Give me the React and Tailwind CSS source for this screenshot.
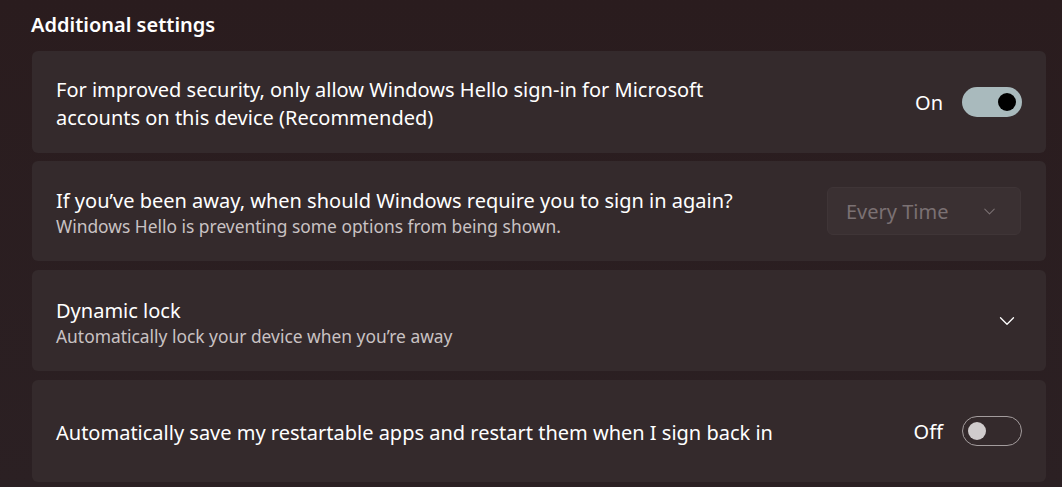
import { ChevronDown } from 'lucide-react';

const font = { fontFamily: '"Noto Sans", "Open Sans", sans-serif' };

const Toggle = ({ on }) =>
  on ? (
    <div className="flex h-[30px] w-[60px] items-center justify-end rounded-full bg-[#a9babd] pr-[6px]">
      <div className="h-[18px] w-[18px] rounded-full bg-black" />
    </div>
  ) : (
    <div className="flex h-[30px] w-[60px] items-center rounded-full border border-[#a39c9d] pl-[5px]">
      <div className="h-[18px] w-[18px] rounded-full bg-[#d0cccd]" />
    </div>
  );

const Card = ({ children, className = '' }) => (
  <div className={`flex items-center justify-between rounded-md bg-[#342a2c] pl-6 pr-6 ${className}`}>
    {children}
  </div>
);

export default function App() {
  return (
    <div
      className="h-[487px] w-[1062px] overflow-hidden bg-gradient-to-b from-[#2a1c1e] to-[#2b2023] pl-8 pr-4 pt-[11px] text-white"
      style={font}
    >
      <h2 className="-ml-px mb-[12px] text-[20px] font-semibold leading-7">Additional settings</h2>
      <div className="flex flex-col">
        <Card className="h-[102px]">
          <p className="pt-[3px] text-[20px] leading-7">
            For improved security, only allow Windows Hello sign-in for Microsoft
            <br />
            accounts on this device (Recommended)
          </p>
          <div className="flex items-center gap-[19px]">
            <span className="pt-[2px] text-[20px]">On</span>
            <Toggle on />
          </div>
        </Card>

        <Card className="mt-2 h-[100px] pr-[25px]">
          <div className="pt-[2px]">
            <p className="text-[20px] leading-[27px]">If you’ve been away, when should Windows require you to sign in again?</p>
            <p className="text-[17.4px] leading-[24px] text-[#c9c2c3]">Windows Hello is preventing some options from being shown.</p>
          </div>
          <div className="flex h-[48px] w-[194px] items-center justify-between rounded-md border border-[#3f3537] bg-[#3a3032] pl-[18px] pr-[21px] text-[#7b7173]">
            <span className="pt-[1px] text-[20px]">Every Time</span>
            <ChevronDown size={19} strokeWidth={1.3} />
          </div>
        </Card>

        <Card className="mt-[9px] h-[101px] pr-[26px]">
          <div className="pt-[3px]">
            <p className="text-[20px] leading-[27px]">Dynamic lock</p>
            <p className="text-[17.4px] leading-[24px] text-[#c9c2c3]">Automatically lock your device when you’re away</p>
          </div>
          <ChevronDown size={26} strokeWidth={1.2} className="text-white" />
        </Card>

        <Card className="mt-[9px] h-[102px]">
          <p className="pt-[3px] text-[20px] leading-7">Automatically save my restartable apps and restart them when I sign back in</p>
          <div className="flex items-center gap-[19px]">
            <span className="pt-[2px] text-[20px]">Off</span>
            <Toggle on={false} />
          </div>
        </Card>
      </div>
    </div>
  );
}
